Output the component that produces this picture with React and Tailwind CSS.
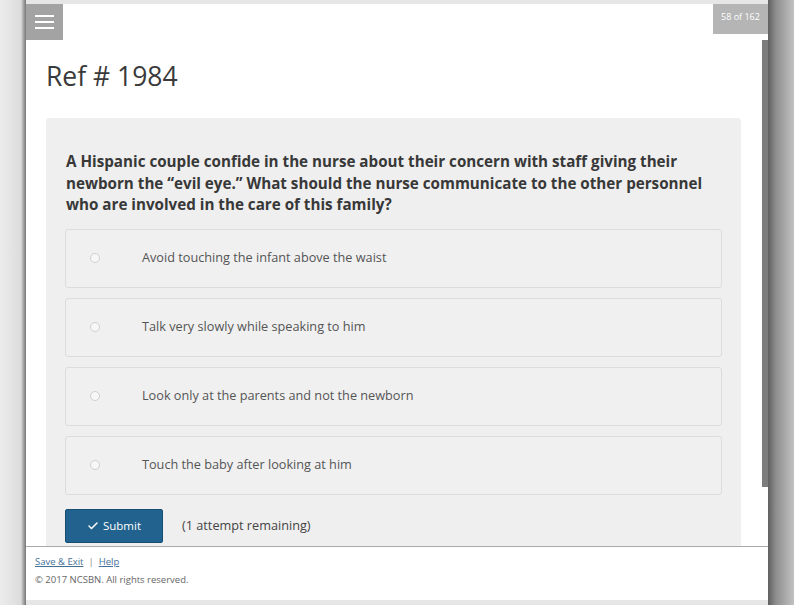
import { Check } from "lucide-react";

const options = [
  "Avoid touching the infant above the waist",
  "Talk very slowly while speaking to him",
  "Look only at the parents and not the newborn",
  "Touch the baby after looking at him",
];

const Option = ({ label }) => (
  <label className="flex h-[59px] items-center rounded-[3px] border border-[#dcdcdc] bg-[#f0f0f0] cursor-pointer">
    <span className="ml-[24px] h-[10px] w-[10px] rounded-full border border-[#cfcfcf] bg-[#f7f7f7]" />
    <span className="ml-[42px] text-[12.7px] text-[#555]">{label}</span>
  </label>
);

export default function App() {
  return (
    <div
      className="flex h-[605px] w-[794px] overflow-hidden bg-[#e6e6e6]"
      style={{ fontFamily: '"Open Sans", "Liberation Sans", sans-serif' }}
    >
      {/* left shadow */}
      <div className="w-[26px] bg-gradient-to-r from-[#ececec] via-[#dcdcdc] via-80% to-[#767676]" />

      {/* page */}
      <div className="mt-[4px] mb-[5px] flex w-[742px] flex-col bg-white">
        <div className="flex h-[36px] items-start justify-between">
          <button className="flex h-[36px] w-[37px] flex-col items-center justify-center gap-[4px] bg-[#a3a3a3]">
            <span className="h-[2px] w-[19px] bg-white" />
            <span className="h-[2px] w-[19px] bg-white" />
            <span className="h-[2px] w-[19px] bg-white" />
          </button>
          <div className="flex h-[30px] w-[55px] items-start justify-center bg-[#b5b5b5] pt-[6px] text-[9px] text-white">
            58 of 162
          </div>
        </div>

        <div className="flex min-h-0 flex-1">
          <main className="flex-1 overflow-hidden pl-[20px] pr-[21px]">
            <h1 className="mt-[20px] text-[26.5px] leading-[33px] text-[#3a3a3a]">Ref # 1984</h1>

            <section className="mt-[25px] rounded-[3px] bg-[#efefef] px-[19px] pt-[33px] pb-[20px]">
              <p className="px-[1px] text-[15.2px] font-bold leading-[21.5px] text-[#383838]">
                A Hispanic couple confide in the nurse about their concern with staff giving their newborn the “evil eye.” What should the nurse communicate to the other personnel who are involved in the care of this family?
              </p>

              <div className="mt-[13px] flex flex-col gap-[10px]">
                {options.map((o) => (
                  <Option key={o} label={o} />
                ))}
              </div>

              <div className="mt-[14px] flex items-center">
                <button className="flex h-[34px] w-[98px] items-center justify-center gap-[4px] rounded-[2px] border border-[#174f73] bg-[#22628e] text-[11.5px] text-white">
                  <Check size={12} strokeWidth={3} />
                  Submit
                </button>
                <span className="ml-[19px] text-[12.7px] text-[#444]">(1 attempt remaining)</span>
              </div>
            </section>
          </main>

          {/* scrollbar */}
          <div className="w-[6px]">
            <div className="h-[447px] bg-[#7d7d7d]" />
          </div>
        </div>

        <footer className="h-[54px] border-t border-[#a8a8a8] pl-[9px] pt-[8px]">
          <div className="text-[9.5px] leading-[14px] text-[#446f96]">
            <a className="underline">Save &amp; Exit</a>
            <span className="mx-[5px] text-[#888]">|</span>
            <a className="underline">Help</a>
          </div>
          <div className="mt-[4px] text-[9.5px] leading-[13px] text-[#666]">© 2017 NCSBN. All rights reserved.</div>
        </footer>
      </div>

      {/* right shadow */}
      <div className="w-[26px] bg-gradient-to-r from-[#5f5f5f] via-[#8e8e8e] via-30% to-[#c2c2c2]" />
    </div>
  );
}
